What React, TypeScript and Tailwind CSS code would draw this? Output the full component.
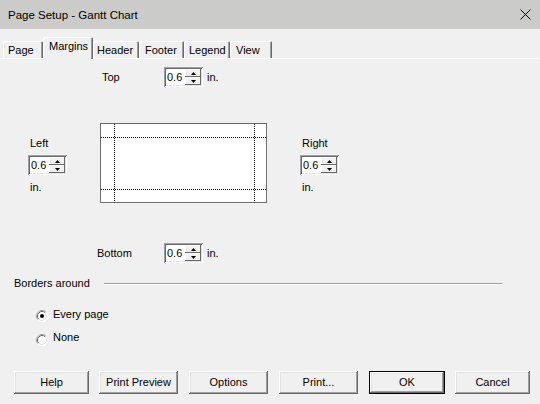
import React from "react";

function SpinArrow({ up }: { up?: boolean }) {
  return (
    <svg width="5" height="3" viewBox="0 0 5 3" className="block">
      {up ? <path d="M2.5 0 L5 3 L0 3 Z" fill="#000" /> : <path d="M0 0 L5 0 L2.5 3 Z" fill="#000" />}
    </svg>
  );
}

function Spin() {
  return (
    <div className="w-[39px] h-[20px] bg-white flex shadow-[inset_1px_1px_0_#a0a0a0,inset_-1px_-1px_0_#ffffff,inset_2px_2px_0_#696969,inset_-2px_-2px_0_#e3e3e3] p-[2px]">
      <div className="flex-1 pl-[1px] text-[11px] leading-[16px] text-black">0.6</div>
      <div className="w-[16px] flex flex-col">
        <div className="h-[8px] bg-[#f0f0f0] flex items-center justify-center shadow-[inset_-1px_-1px_0_#696969,inset_1px_1px_0_#ffffff]">
          <SpinArrow up />
        </div>
        <div className="h-[8px] bg-[#f0f0f0] flex items-center justify-center shadow-[inset_-1px_-1px_0_#696969,inset_1px_1px_0_#ffffff]">
          <SpinArrow />
        </div>
      </div>
    </div>
  );
}

function Radio({ checked }: { checked?: boolean }) {
  return (
    <svg width="12" height="12" viewBox="0 0 12 12" className="block">
      <circle cx="6" cy="6" r="5.5" fill="#ffffff" />
      <path d="M2.11 9.89 A5.5 5.5 0 0 1 9.89 2.11" fill="none" stroke="#a0a0a0" strokeWidth="1" />
      <path d="M9.89 2.11 A5.5 5.5 0 0 1 2.11 9.89" fill="none" stroke="#ffffff" strokeWidth="1" />
      <path d="M2.82 9.18 A4.5 4.5 0 0 1 9.18 2.82" fill="none" stroke="#696969" strokeWidth="1" />
      <path d="M9.18 2.82 A4.5 4.5 0 0 1 2.82 9.18" fill="none" stroke="#e3e3e3" strokeWidth="1" />
      {checked && <circle cx="6" cy="6" r="2" fill="#000" />}
    </svg>
  );
}

function Btn({ label, w, def, cls }: { label: string; w: string; def?: boolean; cls?: string }) {
  return (
    <div className={`${w} h-[23px] ${def ? "border border-black" : ""} ${cls ?? ""}`}>
      <div className="w-full h-full flex items-center justify-center bg-[#f0f0f0] shadow-[inset_-1px_-1px_0_#696969,inset_1px_1px_0_#ffffff,inset_-2px_-2px_0_#a0a0a0,inset_2px_2px_0_#e3e3e3] text-[11px] leading-[13px]">
        {label}
      </div>
    </div>
  );
}

function Tab({ label, w, pl, selected }: { label: string; w: string; pl: string; selected?: boolean }) {
  if (selected) {
    return (
      <div
        className={`${w} ${pl} relative z-10 h-[22px] mb-[-1px] bg-[#f0f0f0] rounded-t-[2px] shadow-[inset_1px_1px_0_#ffffff,inset_-1px_0_0_#696969,inset_-2px_0_0_#a0a0a0] pt-[3px] leading-[13px]`}
      >
        {label}
      </div>
    );
  }
  return (
    <div
      className={`${w} ${pl} h-[17px] bg-[#f0f0f0] rounded-t-[2px] shadow-[inset_1px_1px_0_#ffffff,inset_-1px_0_0_#696969,inset_-2px_0_0_#a0a0a0] pt-[3px] leading-[13px]`}
    >
      {label}
    </div>
  );
}

export default function App() {
  return (
    <div className="w-[540px] h-[404px] bg-[#f0f0f0] flex flex-col overflow-hidden font-['Liberation_Sans',Arial,sans-serif] text-[11px] leading-[13px] text-black">
      {/* Title bar */}
      <div className="h-[29px] shrink-0 bg-[#cbcbc9] flex items-center justify-between pl-[8px] pr-[9px]">
        <span className="text-[11.5px] leading-[14px] text-black">Page Setup - Gantt Chart</span>
        <svg width="11" height="11" viewBox="0 0 11 11" className="block">
          <path d="M0.5 0.5 L10.5 10.5 M10.5 0.5 L0.5 10.5" stroke="#000" strokeWidth="1" />
        </svg>
      </div>

      {/* Tabs */}
      <div className="h-[29px] shrink-0 flex items-end pl-[3px]">
        <Tab label="Page" w="w-[40px]" pl="pl-[5px]" />
        <Tab label="Margins" w="w-[50px]" pl="pl-[6px]" selected />
        <Tab label="Header" w="w-[46px]" pl="pl-[4px]" />
        <Tab label="Footer" w="w-[45px]" pl="pl-[6px]" />
        <Tab label="Legend" w="w-[46px]" pl="pl-[5px]" />
        <Tab label="View" w="w-[42px]" pl="pl-[6px]" />
      </div>

      {/* Panel */}
      <div className="flex-1 flex flex-col border-t border-white">
        {/* Top */}
        <div className="flex items-center mt-[8px] h-[20px]">
          <span className="ml-[102px] w-[62px]">Top</span>
          <Spin />
          <span className="ml-[4px]">in.</span>
        </div>

        {/* Middle */}
        <div className="flex items-start mt-[36px] h-[80px]">
          <div className="ml-[28px] w-[72px] flex flex-col pt-[14px]">
            <span className="pl-[2px] h-[13px]">Left</span>
            <div className="mt-[5px]">
              <Spin />
            </div>
            <span className="pl-[2px] mt-[6px]">in.</span>
          </div>
          <svg width="167" height="80" viewBox="0 0 167 80" className="block">
            <rect x="0.5" y="0.5" width="166" height="79" fill="#ffffff" stroke="#6d6d6d" strokeWidth="1" />
            <path d="M14.5 1 V79 M154.5 1 V79" stroke="#000" strokeWidth="1" strokeDasharray="1 1" />
            <path d="M1 14.5 H166 M1 66.5 H166" stroke="#000" strokeWidth="1" strokeDasharray="1 1" />
          </svg>
          <div className="ml-[33px] flex flex-col pt-[14px]">
            <span className="pl-[2px] h-[13px]">Right</span>
            <div className="mt-[5px]">
              <Spin />
            </div>
            <span className="pl-[2px] mt-[6px]">in.</span>
          </div>
        </div>

        {/* Bottom */}
        <div className="flex items-center mt-[40px] h-[20px]">
          <span className="ml-[97px] w-[67px]">Bottom</span>
          <Spin />
          <span className="ml-[4px]">in.</span>
        </div>

        {/* Borders around */}
        <div className="flex items-center mt-[14px] h-[13px]">
          <span className="ml-[14px] w-[90px]">Borders around</span>
          <div className="w-[398px] h-px bg-[#a0a0a0] shadow-[0_1px_0_#ffffff]" />
        </div>

        <div className="flex items-start mt-[18px] h-[13px]">
          <div className="ml-[36px] mt-[2px]">
            <Radio checked />
          </div>
          <span className="ml-[5px]">Every page</span>
        </div>
        <div className="flex items-start mt-[10px] h-[13px]">
          <div className="ml-[36px] mt-[3px]">
            <Radio />
          </div>
          <span className="ml-[5px]">None</span>
        </div>

        {/* Buttons */}
        <div className="mt-auto mb-[10px] flex items-center">
          <Btn label="Help" w="w-[75px]" cls="ml-[14px]" />
          <Btn label="Print Preview" w="w-[79px]" cls="ml-[10px]" />
          <Btn label="Options" w="w-[79px]" cls="ml-[11px]" />
          <Btn label="Print..." w="w-[79px]" cls="ml-[11px]" />
          <Btn label="OK" w="w-[76px]" cls="ml-[11px]" def />
          <Btn label="Cancel" w="w-[75px]" cls="ml-[10px]" />
        </div>
      </div>
    </div>
  );
}
